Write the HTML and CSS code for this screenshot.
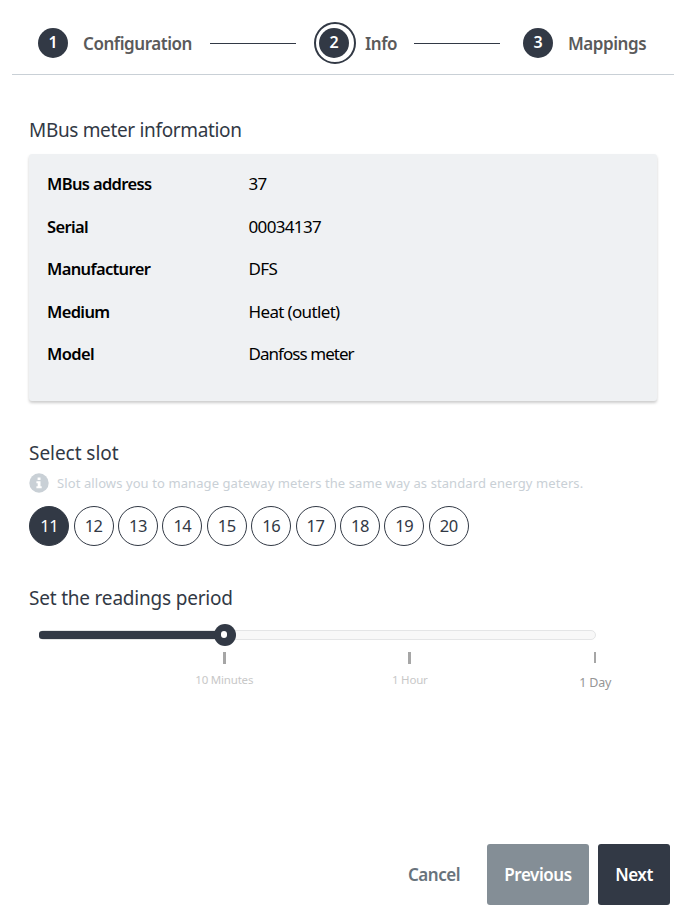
FILE: index.html
```html
<!DOCTYPE html>
<html lang="en">
<head>
<meta charset="utf-8">
<title>MBus meter setup</title>
<link rel="stylesheet" href="styles.css">
</head>
<body>
<div class="wizard">
  <header class="steps">
    <div class="step step-config"><span class="step-badge">1</span><span class="step-label">Configuration</span></div>
    <span class="step-line"></span>
    <div class="step step-info"><span class="step-ring"><span class="step-badge">2</span></span><span class="step-label">Info</span></div>
    <span class="step-line"></span>
    <div class="step step-mappings"><span class="step-badge">3</span><span class="step-label">Mappings</span></div>
  </header>
  <main class="content">
    <h2 class="title title-info">MBus meter information</h2>
    <dl class="info">
      <dt>MBus address</dt><dd>37</dd>
      <dt>Serial</dt><dd>00034137</dd>
      <dt>Manufacturer</dt><dd>DFS</dd>
      <dt>Medium</dt><dd>Heat (outlet)</dd>
      <dt>Model</dt><dd class="model">Danfoss meter</dd>
    </dl>
    <h2 class="title title-slot">Select slot</h2>
    <p class="hint">
      <svg class="hint-icon" viewBox="0 0 20 20" aria-hidden="true"><circle cx="10" cy="10" r="9.7" fill="#c9d0d6"/><path d="M8.6 4.5h2.9v2.6H8.6zM7.4 8.3h4.1v5h1.2v1.9H7.4v-1.9h1.3v-3.1H7.4z" fill="#fff"/></svg>
      <span class="hint-text">Slot allows you to manage gateway meters the same way as standard energy meters.</span>
    </p>
    <div class="slots">
      <button class="slot slot-on">11</button><button class="slot">12</button><button class="slot">13</button><button class="slot">14</button><button class="slot">15</button><button class="slot">16</button><button class="slot">17</button><button class="slot">18</button><button class="slot">19</button><button class="slot">20</button>
    </div>
    <h2 class="title title-period">Set the readings period</h2>
    <div class="slider">
      <div class="track"><div class="fill"></div><div class="thumb"></div></div>
      <div class="ticks">
        <div class="tick"><i></i><span>10 Minutes</span></div>
        <div class="tick"><i></i><span>1 Hour</span></div>
        <div class="tick tick-last"><i></i><span>1 Day</span></div>
      </div>
    </div>
  </main>
  <footer class="actions">
    <button class="btn btn-cancel">Cancel</button>
    <button class="btn btn-previous">Previous</button>
    <button class="btn btn-next">Next</button>
  </footer>
</div>
</body>
</html>
```
FILE: styles.css
```css
* { box-sizing: border-box; }
body { margin: 0; background: #fff; color: #000; font-family: "Noto Sans", "Open Sans", sans-serif; }
button { font: inherit; padding: 0; border: 0; background: none; }
.wizard { width: 686px; height: 918px; display: flex; flex-direction: column; overflow: hidden; }

.steps { height: 75px; flex: none; margin: 0 12px; padding: 11px 0 0 26px; display: flex; align-items: center; border-bottom: 1px solid #c9d0d6; }
.step { display: flex; align-items: center; white-space: nowrap; }
.step-config { width: 172px; gap: 15px; }
.step-info { width: 100px; margin-left: 18px; gap: 9px; }
.step-mappings { margin-left: 23px; gap: 15px; }
.step-badge { width: 30px; height: 30px; border-radius: 50%; background: #323945; color: #fff; font-size: 16px; font-weight: 600; line-height: 29px; text-align: center; flex: none; }
.step-ring { width: 42px; height: 42px; padding: 4px; border: 2px solid #323945; border-radius: 50%; flex: none; }
.step-ring .step-badge { display: block; margin-left: -1px; }
.step-label { margin-top: 3px; font-size: 17px; font-weight: 600; line-height: 24px; color: #5a5a5a; letter-spacing: -.45px; }
.step-line { width: 86px; height: 1px; margin-top: 1px; background: #323945; flex: none; }

.content { flex: 1; padding: 41px 29px 0; }
.title { margin: 0; height: 28px; font-size: 19px; line-height: 28px; font-weight: 400; color: #323945; white-space: nowrap; letter-spacing: -.2px; }
.title-info { letter-spacing: -.34px; }
.info { margin: 10px 0 0; width: 628px; height: 247px; padding: 9px 18px; display: grid; grid-template-columns: 201.5px 1fr; grid-auto-rows: 42.5px; background: #eff1f3; border-radius: 3px; box-shadow: 0 2px 3px rgba(0,0,0,.2); font-size: 17px; line-height: 42px; letter-spacing: -.65px; white-space: nowrap; }
.info dt { font-size: 16.5px; font-weight: 600; }
.info dd { margin: 0; }
.info .model { letter-spacing: -.95px; }
.title-slot { margin-top: 38px; letter-spacing: -.05px; }
.hint { margin: 6px 0 0; height: 20px; display: flex; align-items: center; gap: 8px; color: #c9d0d6; font-size: 13px; line-height: 20px; letter-spacing: .09px; white-space: nowrap; }
.hint-icon { width: 20px; height: 20px; flex: none; }
.slots { margin: 13px 0 0 .2px; display: flex; gap: 4.4px; }
.slot { width: 40px; height: 40px; border: 1px solid #323945; border-radius: 50%; color: #323945; font-size: 16.5px; line-height: 38px; letter-spacing: -.5px; text-align: center; }
.slot-on { background: #323945; color: #fff; }
.title-period { margin-top: 38px; }

.slider { margin: 18px 0 0 10px; width: 557px; }
.track { position: relative; height: 10px; border: 1px solid #e4e5e6; border-radius: 5px; background: #f8f8f8; }
.fill { width: 186px; height: 8px; margin-left: -1px; border-radius: 3px; background: #323945; }
.thumb { position: absolute; left: 174px; top: -7px; width: 22px; height: 22px; border-radius: 50%; background: #323945; }
.thumb::after { content: ""; position: absolute; left: 7px; top: 7px; width: 6px; height: 7px; border-radius: 3px; background: #fff; }
.ticks { margin: 12px 0 0 92.5px; display: grid; grid-template-columns: repeat(3, 185.5px); }
.tick { display: flex; flex-direction: column; align-items: center; color: #c8c8c8; font-size: 11.5px; line-height: 16px; letter-spacing: -.2px; white-space: nowrap; }
.tick i { width: 3px; height: 12px; background: #a6a6a6; margin-bottom: 8px; }
.tick-last { color: #969696; font-size: 12.5px; }
.tick-last i { width: 2px; height: 11px; margin-bottom: 12px; }

.actions { flex: none; height: 74px; padding-right: 16px; display: flex; justify-content: flex-end; font-size: 17px; font-weight: 600; }
.btn { height: 61px; padding-top: 1px; line-height: 60px; border-radius: 3px; color: #fff; letter-spacing: -.45px; white-space: nowrap; }
.btn-cancel { width: 54px; margin-right: 26px; color: #68737c; }
.btn-previous { width: 102px; margin-right: 9px; background: #848e96; }
.btn-next { width: 72px; background: #323945; }
```
